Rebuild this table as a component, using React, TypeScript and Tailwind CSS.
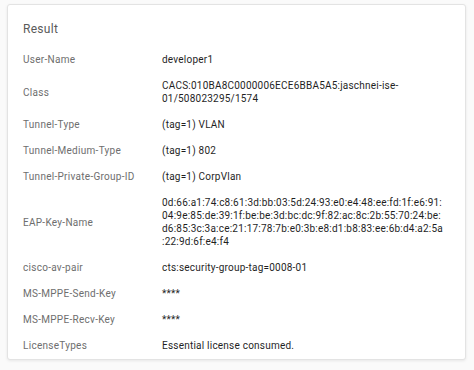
const rows: { label: string; lines: string[] }[] = [
  { label: "User-Name", lines: ["developer1"] },
  { label: "Class", lines: ["CACS:010BA8C0000006ECE6BBA5A5:jaschnei-ise-", "01/508023295/1574"] },
  { label: "Tunnel-Type", lines: ["(tag=1) VLAN"] },
  { label: "Tunnel-Medium-Type", lines: ["(tag=1) 802"] },
  { label: "Tunnel-Private-Group-ID", lines: ["(tag=1) CorpVlan"] },
  {
    label: "EAP-Key-Name",
    lines: [
      "0d:66:a1:74:c8:61:3d:bb:03:5d:24:93:e0:e4:48:ee:fd:1f:e6:91:",
      "04:9e:85:de:39:1f:be:be:3d:bc:dc:9f:82:ac:8c:2b:55:70:24:be:",
      "d6:85:3c:3a:ce:21:17:78:7b:e0:3b:e8:d1:b8:83:ee:6b:d4:a2:5a",
      ":22:9d:6f:e4:f4",
    ],
  },
  { label: "cisco-av-pair", lines: ["cts:security-group-tag=0008-01"] },
  { label: "MS-MPPE-Send-Key", lines: ["****"] },
  { label: "MS-MPPE-Recv-Key", lines: ["****"] },
  { label: "LicenseTypes", lines: ["Essential license consumed."] },
];

export default function App() {
  return (
    <div className="w-[474px] h-[370px] bg-[#fafafa] pl-[7px] pr-[8px] pt-[4px] font-['Roboto',sans-serif]">
      <div className="h-[356px] bg-white border border-[#e3e3e3] rounded-[3px] shadow-[0_1px_3px_rgba(0,0,0,0.08)] pl-[15px] pt-[17px]">
        <div className="text-[12px] leading-[14px] text-[#5a5a5a] tracking-[0.3px]">Result</div>
        <div className="mt-[17px] flex flex-col gap-[13px]">
          {rows.map((r) => (
            <div key={r.label} className="flex items-center">
              <div className="w-[139px] shrink-0 text-[10px] leading-[13px] text-[#6e6e6e] tracking-[0.28px]">{r.label}</div>
              <div className="text-[10px] leading-[13px] text-[#1f1f1f] tracking-[0.22px] whitespace-nowrap">
                {r.lines.map((l, i) => (
                  <div key={i}>{l}</div>
                ))}
              </div>
            </div>
          ))}
        </div>
      </div>
    </div>
  );
}
